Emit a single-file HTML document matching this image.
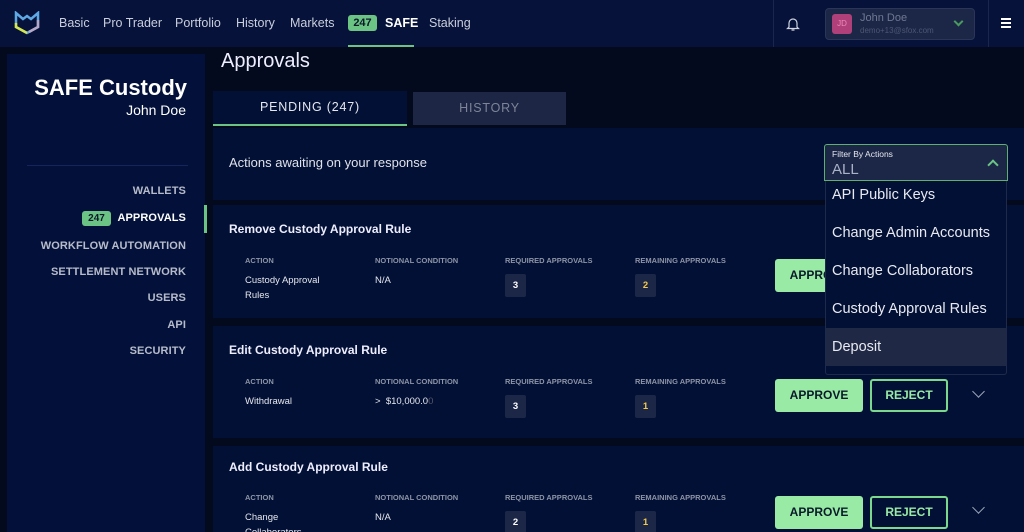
<!DOCTYPE html>
<html><head><meta charset="utf-8"><style>
*{box-sizing:border-box;margin:0;padding:0}
html,body{width:1024px;height:532px;overflow:hidden}
body{background:#030a1e;font-family:"Liberation Sans",sans-serif;color:#fff;position:relative}
.a{position:absolute}
.nav{left:0;top:0;width:1024px;height:47px;background:#06123a}
.nl{top:16px;font-size:12.5px;color:#c9cfdd}
.badge{background:#6cc484;color:#0a1a2a;font-weight:bold;border-radius:3px;font-size:11px;text-align:center}
.side{left:7px;top:54px;width:198px;height:478px;background:#03113a}
.si{right:838px;font-size:11px;font-weight:bold;color:#b7bccb;letter-spacing:.1px}
.card{left:213px;width:811px;background:#021035}
.ct{left:16px;font-size:12px;font-weight:bold;color:#eef}
.lb{font-size:7.5px;font-weight:bold;color:#8d94a6}
.v{font-size:9.5px;color:#e6e8ee;line-height:15px}
.box{width:21px;height:23px;background:#1c2748;border-radius:2px;font-size:9.5px;font-weight:bold;text-align:center;line-height:23px}
.ap{width:88px;height:33px;background:#98eaa5;color:#0a1a2a;border-radius:3px;font-weight:bold;font-size:12px;text-align:center;line-height:33px}
.rj{width:78px;height:33px;border:2px solid #7ad98d;color:#98eaa5;border-radius:3px;font-weight:bold;font-size:12px;text-align:center;line-height:29px}
.chev{width:9px;height:9px;border-right:1.5px solid #9aa3b5;border-bottom:1.5px solid #9aa3b5;transform:rotate(45deg)}
.di{left:0;width:181px;height:38px;padding-left:6px;font-size:14.5px;line-height:38px;color:#e8eaf0}
</style></head><body>
<div class="a nav"></div>
<svg class="a" style="left:14px;top:11px" width="26" height="24" viewBox="0 0 26 24"><path d="M2 2 L9 8 L13 5 L17 8 L24 2 L24 16 L13 22 L2 16 Z" fill="none" stroke="#5ea8e6" stroke-width="2.5"/><path d="M2 12 L2 16 L13 22" fill="none" stroke="#d8e84a" stroke-width="2.5"/><path d="M24 9 L24 16 L15 21" fill="none" stroke="#b8a8c8" stroke-width="2.5"/></svg>
<div class="a nl" style="left:59px">Basic</div>
<div class="a nl" style="left:103px">Pro Trader</div>
<div class="a nl" style="left:175px">Portfolio</div>
<div class="a nl" style="left:236px">History</div>
<div class="a nl" style="left:290px">Markets</div>
<div class="a badge" style="left:348px;top:15px;width:29px;height:16px;line-height:16px">247</div>
<div class="a nl" style="left:385px;color:#fff;font-weight:bold">SAFE</div>
<div class="a" style="left:348px;top:45px;width:66px;height:2px;background:#6cc484"></div>
<div class="a nl" style="left:429px">Staking</div>
<div class="a" style="left:773px;top:0;width:1px;height:47px;background:#1a2550"></div>
<div class="a" style="left:988px;top:0;width:1px;height:47px;background:#1a2550"></div>
<svg class="a" style="left:786px;top:16px" width="14" height="16" viewBox="0 0 14 16"><path d="M3 11V7a4 4 0 0 1 8 0v4l1.5 1.5h-11z M5.5 14h3" fill="none" stroke="#cfd4e0" stroke-width="1.2"/></svg>
<div class="a" style="left:825px;top:8px;width:150px;height:32px;background:#1c2748;border-radius:4px;border:1px solid #2a3558"></div>
<div class="a" style="left:832px;top:14px;width:20px;height:20px;background:#b0407a;border-radius:3px;font-size:8px;line-height:20px;text-align:center;color:#e8b">JD</div>
<div class="a" style="left:860px;top:12px;font-size:11px;color:#6f7891">John Doe</div>
<div class="a" style="left:860px;top:26px;font-size:8px;color:#4d5572">demo+13@sfox.com</div>
<div class="a" style="left:955px;top:18px;width:7px;height:7px;border-right:2px solid #4a9a60;border-bottom:2px solid #4a9a60;transform:rotate(45deg)"></div>
<div class="a" style="left:1001px;top:18px;width:10px;height:2px;background:#fff;box-shadow:0 4px #fff,0 8px #fff"></div>

<div class="a side"></div>
<div class="a" style="right:837px;top:75px;font-size:22px;font-weight:bold">SAFE Custody</div>
<div class="a" style="right:838px;top:102px;font-size:14px">John Doe</div>
<div class="a" style="left:27px;top:165px;width:161px;height:1px;background:#15245a"></div>
<div class="a si" style="top:185px">WALLETS</div>
<div class="a si" style="top:212px;color:#fff">APPROVALS</div>
<div class="a badge" style="left:82px;top:211px;width:29px;height:15px;line-height:15px;font-size:10px">247</div>
<div class="a" style="left:204px;top:205px;width:3px;height:28px;background:#6cc484"></div>
<div class="a si" style="top:240px">WORKFLOW AUTOMATION</div>
<div class="a si" style="top:266px">SETTLEMENT NETWORK</div>
<div class="a si" style="top:292px">USERS</div>
<div class="a si" style="top:319px">API</div>
<div class="a si" style="top:345px">SECURITY</div>

<div class="a" style="left:221px;top:50px;font-size:20px;color:#eef">Approvals</div>
<div class="a" style="left:213px;top:91px;width:194px;height:35px;background:#021035;border-bottom:2px solid #6cc484;text-align:center;line-height:33px;font-size:12.5px;letter-spacing:.8px;color:#e6e8ee">PENDING (247)</div>
<div class="a" style="left:413px;top:92px;width:153px;height:33px;background:#1d2745;text-align:center;line-height:33px;font-size:12.5px;letter-spacing:.8px;color:#7d8497">HISTORY</div>

<div class="a card" style="top:128px;height:72px"><div class="a" style="left:16px;top:27px;font-size:13px;color:#dfe2ea">Actions awaiting on your response</div></div>

<div class="a card" style="top:205px;height:113px">
<div class="a ct" style="top:17px">Remove Custody Approval Rule</div>
<div class="a lb" style="left:32px;top:51px">ACTION</div><div class="a lb" style="left:162px;top:51px">NOTIONAL CONDITION</div><div class="a lb" style="left:292px;top:51px">REQUIRED APPROVALS</div><div class="a lb" style="left:422px;top:51px">REMAINING APPROVALS</div>
<div class="a v" style="left:32px;top:68px">Custody Approval<br>Rules</div><div class="a v" style="left:162px;top:68px">N/A</div>
<div class="a box" style="left:292px;top:69px">3</div><div class="a box" style="left:422px;top:69px;color:#f2c94c">2</div>
<div class="a ap" style="left:562px;top:54px">APPROVE</div>
</div>

<div class="a card" style="top:326px;height:112px">
<div class="a ct" style="top:17px">Edit Custody Approval Rule</div>
<div class="a lb" style="left:32px;top:51px">ACTION</div><div class="a lb" style="left:162px;top:51px">NOTIONAL CONDITION</div><div class="a lb" style="left:292px;top:51px">REQUIRED APPROVALS</div><div class="a lb" style="left:422px;top:51px">REMAINING APPROVALS</div>
<div class="a v" style="left:32px;top:68px">Withdrawal</div><div class="a v" style="left:162px;top:68px">&gt;&nbsp; $10,000.0<span style="color:#556">0</span></div>
<div class="a box" style="left:292px;top:69px">3</div><div class="a box" style="left:422px;top:69px;color:#f2c94c">1</div>
<div class="a ap" style="left:562px;top:53px">APPROVE</div><div class="a rj" style="left:657px;top:53px">REJECT</div>
<div class="a chev" style="left:761px;top:61px"></div>
</div>

<div class="a card" style="top:446px;height:86px">
<div class="a ct" style="top:14px">Add Custody Approval Rule</div>
<div class="a lb" style="left:32px;top:47px">ACTION</div><div class="a lb" style="left:162px;top:47px">NOTIONAL CONDITION</div><div class="a lb" style="left:292px;top:47px">REQUIRED APPROVALS</div><div class="a lb" style="left:422px;top:47px">REMAINING APPROVALS</div>
<div class="a v" style="left:32px;top:64px">Change<br>Collaborators</div><div class="a v" style="left:162px;top:64px">N/A</div>
<div class="a box" style="left:292px;top:65px">2</div><div class="a box" style="left:422px;top:65px;color:#f2c94c">1</div>
<div class="a ap" style="left:562px;top:50px">APPROVE</div><div class="a rj" style="left:657px;top:50px">REJECT</div>
<div class="a chev" style="left:761px;top:57px"></div>
</div>

<div class="a" style="left:824px;top:144px;width:184px;height:37px;background:#1c2748;border:1px solid #5fae72;border-radius:3px 3px 0 0">
<div class="a" style="left:7px;top:4px;font-size:8.5px;color:#e6e8ee">Filter By Actions</div>
<div class="a" style="left:7px;top:16px;font-size:15px;color:#aab2c6">ALL</div>
<div class="a" style="left:164px;top:16px;width:8px;height:8px;border-left:2px solid #6cc484;border-top:2px solid #6cc484;transform:rotate(45deg)"></div>
</div>
<div class="a" style="left:825px;top:181px;width:182px;height:194px;background:#021035;border:1px solid #1e2a4c;border-top:none;border-radius:0 0 3px 3px">
<div class="a di" style="top:-5px">API Public Keys</div>
<div class="a di" style="top:33px">Change Admin Accounts</div>
<div class="a di" style="top:71px">Change Collaborators</div>
<div class="a di" style="top:109px">Custody Approval Rules</div>
<div class="a di" style="top:147px;background:#1f2844">Deposit</div>
</div>
</body></html>
